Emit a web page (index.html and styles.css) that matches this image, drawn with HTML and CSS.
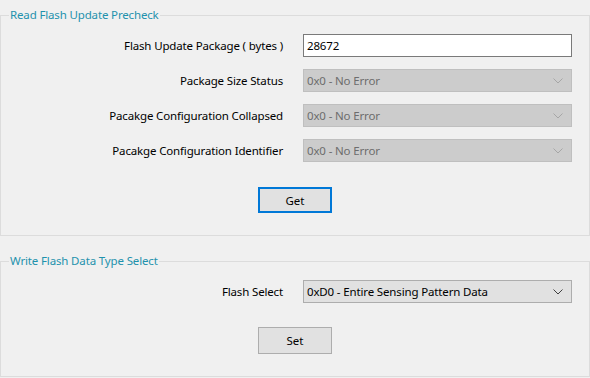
FILE: index.html
```html
<!DOCTYPE html>
<html lang="en">
<head>
    <meta charset="UTF-8">
    <title>Flash Update</title>
    <link rel="stylesheet" href="styles.css">
</head>
<body>
    <fieldset class="group group-precheck">
        <legend>Read Flash Update Precheck</legend>
        <div class="form-grid">
            <label>Flash Update Package ( bytes )</label>
            <div class="textbox">28672</div>

            <label>Package Size Status</label>
            <div class="combo disabled">
                <span>0x0 - No Error</span>
                <svg class="chevron" width="10" height="6" viewBox="0 0 10 6"><polyline points="0.5,0.5 5,5 9.5,0.5" /></svg>
            </div>

            <label>Pacakge Configuration Collapsed</label>
            <div class="combo disabled">
                <span>0x0 - No Error</span>
                <svg class="chevron" width="10" height="6" viewBox="0 0 10 6"><polyline points="0.5,0.5 5,5 9.5,0.5" /></svg>
            </div>

            <label>Pacakge Configuration Identifier</label>
            <div class="combo disabled">
                <span>0x0 - No Error</span>
                <svg class="chevron" width="10" height="6" viewBox="0 0 10 6"><polyline points="0.5,0.5 5,5 9.5,0.5" /></svg>
            </div>
        </div>
        <div class="actions">
            <button class="btn btn-default">Get</button>
        </div>
    </fieldset>

    <fieldset class="group group-write">
        <legend>Write Flash Data Type Select</legend>
        <div class="form-grid">
            <label>Flash Select</label>
            <div class="combo">
                <span>0xD0 - Entire Sensing Pattern Data</span>
                <svg class="chevron" width="10" height="6" viewBox="0 0 10 6"><polyline points="0.5,0.5 5,5 9.5,0.5" /></svg>
            </div>
        </div>
        <div class="actions">
            <button class="btn">Set</button>
        </div>
    </fieldset>
</body>
</html>
```

FILE: styles.css
```css
body {
    margin: 0;
    background-color: #f0f0f0;
    font-family: "Noto Sans", "Open Sans", sans-serif;
    font-size: 11.5px;
    letter-spacing: -0.15px;
    color: #000;
}
.group {
    margin: 0;
    border: 1px solid #dcdcdc;
    padding: 11px 17px 22px 0;
    min-width: 0;
}
.group-precheck {
    margin-top: 7px;
}
.group-write {
    margin-top: 17px;
}
.group legend {
    margin-left: 8px;
    padding: 0 1px;
    line-height: 16px;
    color: #1f92ad;
}
.form-grid {
    display: grid;
    grid-template-columns: 1fr 269px;
    column-gap: 20px;
    row-gap: 12px;
    align-items: center;
}
.form-grid label {
    text-align: right;
    white-space: nowrap;
}
.textbox, .combo {
    box-sizing: border-box;
    height: 23px;
    display: flex;
    align-items: center;
    padding: 0 8px 0 3px;
    white-space: nowrap;
}
.textbox {
    background-color: #fff;
    border: 1px solid #7a7a7a;
}
.combo {
    justify-content: space-between;
    background-color: #e1e1e1;
    border: 1px solid #adadad;
}
.combo.disabled {
    background-color: #cccccc;
    border-color: #bfbfbf;
    color: #6d6d6d;
}
.chevron polyline {
    fill: none;
    stroke: #404040;
    stroke-width: 1;
}
.combo.disabled .chevron polyline {
    stroke: #a6a6a6;
}
.actions {
    display: flex;
    justify-content: center;
    padding-left: 17px;
    margin-top: 25px;
}
.group-write .actions {
    margin-top: 24px;
}
.btn {
    box-sizing: border-box;
    width: 74px;
    height: 27px;
    font: inherit;
    background-color: #e1e1e1;
    border: 1px solid #adadad;
    padding: 0;
}
.btn-default {
    border: 2px solid #0078d7;
    height: 26px;
}
```
